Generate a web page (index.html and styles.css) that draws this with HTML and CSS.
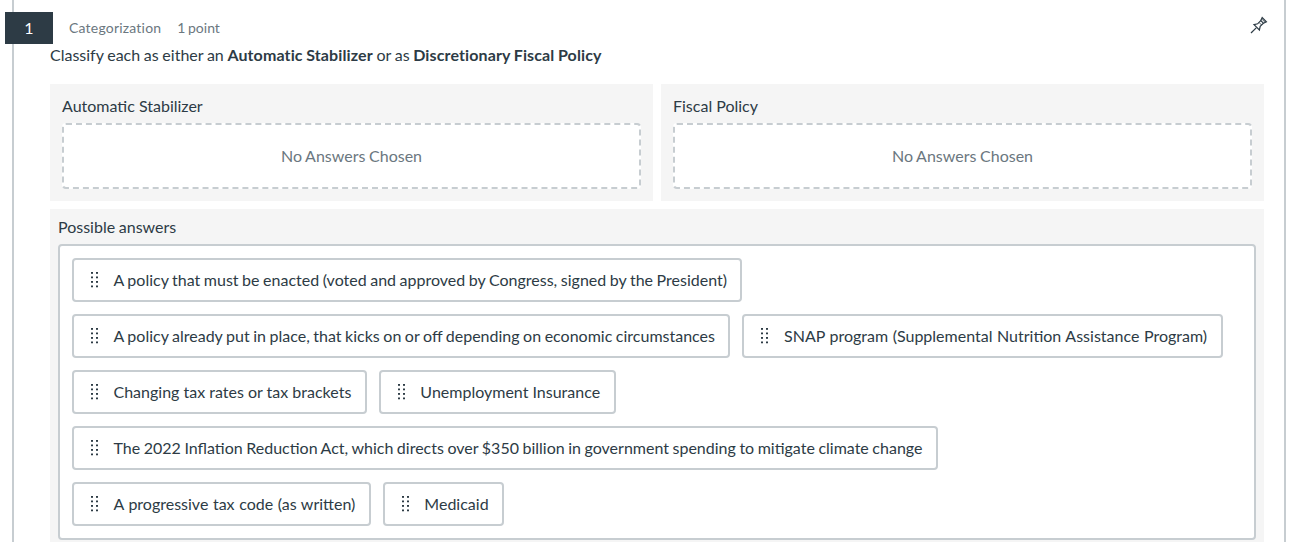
FILE: index.html
```html
<!DOCTYPE html>
<html lang="en">

<head>
  <meta charset="UTF-8">
  <meta name="viewport" content="width=device-width, initial-scale=1.0">
  <title>Quiz question</title>
  <link rel="stylesheet" href="styles.css">
</head>

<body>
  <div class="question">
    <div class="question-number">1</div>
    <div class="question-header">
      <span class="question-type">Categorization</span>
      <span class="question-points">1 point</span>
      <svg class="pin" width="18" height="18" viewBox="0 0 18 18" fill="none" stroke="#2d3b45" stroke-width="1.2">
        <path d="M1 17 L6.2 11.8" />
        <path d="M4 8.6 L9.4 14 L10.2 10.4 L13.4 7.2 L10.8 4.6 L7.6 7.8 Z" />
        <path d="M10.8 4.6 L12.2 1.6 L16.4 5.8 L13.4 7.2" />
        <path d="M9 6.4 L11.6 9 M12 3.2 L14.8 6" stroke-width="0.8" />
      </svg>
    </div>
    <p class="prompt">Classify each as either an <strong>Automatic Stabilizer</strong> or as <strong>Discretionary Fiscal Policy</strong></p>

    <div class="buckets">
      <div class="bucket">
        <div class="bucket-title">Automatic Stabilizer</div>
        <div class="dropzone">No Answers Chosen</div>
      </div>
      <div class="bucket">
        <div class="bucket-title">Fiscal Policy</div>
        <div class="dropzone">No Answers Chosen</div>
      </div>
    </div>

    <div class="possible">
      <div class="possible-title">Possible answers</div>
      <div class="answers">
        <div class="answer tight"><span class="grip"></span>A policy that must be enacted (voted and approved by Congress, signed by the President)</div>
        <div class="answer tight"><span class="grip"></span>A policy already put in place, that kicks on or off depending on economic circumstances</div>
        <div class="answer loose"><span class="grip"></span>SNAP program (Supplemental Nutrition Assistance Program)</div>
        <div class="answer"><span class="grip"></span>Changing tax rates or tax brackets</div>
        <div class="answer"><span class="grip"></span>Unemployment Insurance</div>
        <div class="answer tight"><span class="grip"></span>The 2022 Inflation Reduction Act, which directs over $350 billion in government spending to mitigate climate change</div>
        <div class="answer loose"><span class="grip"></span>A progressive tax code (as written)</div>
        <div class="answer"><span class="grip"></span>Medicaid</div>
      </div>
    </div>
  </div>
</body>

</html>
```

FILE: styles.css
```css
*,
*::before,
*::after {
  box-sizing: border-box;
}

html,
body {
  margin: 0;
  padding: 0;
  height: 542px;
  overflow: hidden;
  background: #fff;
  font-family: Lato, sans-serif;
  font-size: 16px;
  color: #2d3b45;
}

.question {
  position: relative;
  width: 1274px;
  margin-left: 12px;
  padding: 0 20px 12px 36px;
  border-left: 2px solid #c7cdd1;
  border-right: 2px solid #c7cdd1;
}

.question-number {
  position: absolute;
  top: 12px;
  left: -9px;
  width: 48px;
  height: 32px;
  line-height: 32px;
  text-align: center;
  background: #2d3b45;
  color: #fff;
  font-size: 16px;
}

.question-header {
  display: flex;
  align-items: center;
  height: 44px;
  padding: 10px 0 0 19px;
  font-size: 14px;
  color: #6b7780;
}

.question-type {
  letter-spacing: 0.2px;
}

.question-points {
  margin-left: 16px;
  word-spacing: -1px;
}

.pin {
  margin-left: auto;
  margin-right: -4px;
  margin-top: -4px;
}

.prompt {
  margin: 0;
  line-height: 22px;
  word-spacing: -0.45px;
}

.prompt strong {
  font-weight: 700;
  letter-spacing: 0.12px;
}

.buckets {
  display: flex;
  gap: 8px;
  margin-top: 18px;
}

.bucket {
  flex: 1;
  height: 117px;
  padding: 12px;
  background: #f5f5f5;
}

.bucket-title {
  line-height: 20px;
  margin-bottom: 7px;
}

.dropzone {
  display: flex;
  align-items: center;
  justify-content: center;
  height: 66px;
  padding-bottom: 2px;
  background: #fff;
  border: 2px dashed #c7cdd1;
  border-radius: 4px;
  color: #6b7780;
  word-spacing: -0.45px;
}

.possible {
  margin-top: 8px;
  padding: 8px 8px 12px;
  background: #f5f5f5;
}

.possible-title {
  line-height: 20px;
  margin-bottom: 7px;
  word-spacing: -0.45px;
}

.answers {
  display: flex;
  flex-wrap: wrap;
  gap: 12px;
  padding: 12px;
  background: #fff;
  border: 2px solid #c7cdd1;
  border-radius: 4px;
}

.answer {
  display: flex;
  align-items: center;
  height: 44px;
  padding: 0 13.5px 2px 17px;
  background: #fff;
  border: 2px solid #c7cdd1;
  border-radius: 4px;
  white-space: nowrap;
}

.answer.tight {
  word-spacing: -0.55px;
}

.answer.loose {
  word-spacing: 0.5px;
}

.grip {
  width: 8px;
  height: 17px;
  margin-top: 3px;
  margin-right: 14.5px;
  background-image: radial-gradient(circle at 1px 1px, #2d3b45 1px, transparent 1.1px);
  background-size: 5px 4.5px;
}
```
